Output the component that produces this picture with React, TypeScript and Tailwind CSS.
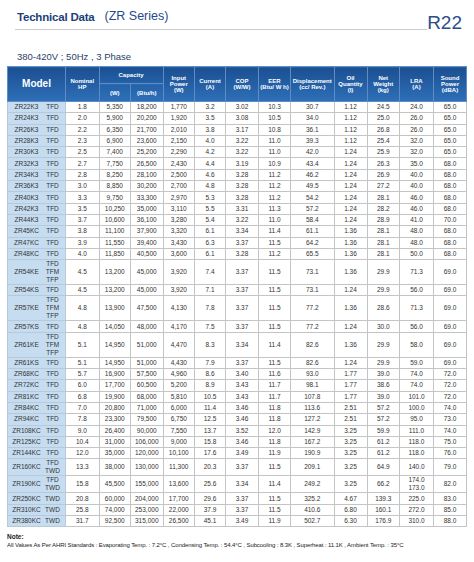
import React from "react";

type Row = { m: string; t: string[]; v: string[] };

const rows: Row[] = [
  { m: "ZR22K3", t: ["TFD"], v: ["1.8", "5,350", "18,200", "1,770", "3.2", "3.02", "10.3", "30.7", "1.12", "24.5", "24.0", "65.0"] },
  { m: "ZR24K3", t: ["TFD"], v: ["2.0", "5,900", "20,200", "1,920", "3.5", "3.08", "10.5", "34.0", "1.12", "25.0", "26.0", "65.0"] },
  { m: "ZR26K3", t: ["TFD"], v: ["2.2", "6,350", "21,700", "2,010", "3.8", "3.17", "10.8", "36.1", "1.12", "26.8", "26.0", "65.0"] },
  { m: "ZR28K3", t: ["TFD"], v: ["2.3", "6,900", "23,600", "2,150", "4.0", "3.22", "11.0", "39.3", "1.12", "25.4", "32.0", "65.0"] },
  { m: "ZR30K3", t: ["TFD"], v: ["2.5", "7,400", "25,200", "2,290", "4.2", "3.22", "11.0", "42.0", "1.24", "25.9", "32.0", "65.0"] },
  { m: "ZR32K3", t: ["TFD"], v: ["2.7", "7,750", "26,500", "2,430", "4.4", "3.19", "10.9", "43.4", "1.24", "26.3", "35.0", "68.0"] },
  { m: "ZR34K3", t: ["TFD"], v: ["2.8", "8,250", "28,100", "2,500", "4.6", "3.28", "11.2", "46.2", "1.24", "26.9", "40.0", "68.0"] },
  { m: "ZR36K3", t: ["TFD"], v: ["3.0", "8,850", "30,200", "2,700", "4.8", "3.28", "11.2", "49.5", "1.24", "27.2", "40.0", "68.0"] },
  { m: "ZR40K3", t: ["TFD"], v: ["3.3", "9,750", "33,300", "2,970", "5.3", "3.28", "11.2", "54.2", "1.24", "28.1", "46.0", "68.0"] },
  { m: "ZR42K3", t: ["TFD"], v: ["3.5", "10,250", "35,000", "3,110", "5.5", "3.31", "11.3", "57.2", "1.24", "28.2", "46.0", "68.0"] },
  { m: "ZR44K3", t: ["TFD"], v: ["3.7", "10,600", "36,100", "3,280", "5.4", "3.22", "11.0", "58.4", "1.24", "28.9", "41.0", "70.0"] },
  { m: "ZR45KC", t: ["TFD"], v: ["3.8", "11,100", "37,900", "3,320", "6.1", "3.34", "11.4", "61.1", "1.36", "28.1", "48.0", "68.0"] },
  { m: "ZR47KC", t: ["TFD"], v: ["3.9", "11,550", "39,400", "3,430", "6.3", "3.37", "11.5", "64.2", "1.36", "28.1", "48.0", "68.0"] },
  { m: "ZR48KC", t: ["TFD"], v: ["4.0", "11,850", "40,500", "3,600", "6.1", "3.28", "11.2", "65.5", "1.36", "28.1", "50.0", "68.0"] },
  { m: "ZR54KE", t: ["TFD", "TFM", "TFP"], v: ["4.5", "13,200", "45,000", "3,920", "7.4", "3.37", "11.5", "73.1", "1.36", "29.9", "71.3", "69.0"] },
  { m: "ZR54KS", t: ["TFD"], v: ["4.5", "13,200", "45,000", "3,920", "7.1", "3.37", "11.5", "73.1", "1.24", "29.9", "56.0", "69.0"] },
  { m: "ZR57KE", t: ["TFD", "TFM", "TFP"], v: ["4.8", "13,900", "47,500", "4,130", "7.8", "3.37", "11.5", "77.2", "1.36", "28.6", "71.3", "69.0"] },
  { m: "ZR57KS", t: ["TFD"], v: ["4.8", "14,050", "48,000", "4,170", "7.5", "3.37", "11.5", "77.2", "1.24", "30.0", "56.0", "69.0"] },
  { m: "ZR61KE", t: ["TFD", "TFM", "TFP"], v: ["5.1", "14,950", "51,000", "4,470", "8.3", "3.34", "11.4", "82.6", "1.36", "29.9", "58.0", "69.0"] },
  { m: "ZR61KS", t: ["TFD"], v: ["5.1", "14,950", "51,000", "4,430", "7.9", "3.37", "11.5", "82.6", "1.24", "29.9", "59.0", "69.0"] },
  { m: "ZR68KC", t: ["TFD"], v: ["5.7", "16,900", "57,500", "4,960", "8.6", "3.40", "11.6", "93.0", "1.77", "39.0", "74.0", "72.0"] },
  { m: "ZR72KC", t: ["TFD"], v: ["6.0", "17,700", "60,500", "5,200", "8.9", "3.43", "11.7", "98.1", "1.77", "38.6", "74.0", "72.0"] },
  { m: "ZR81KC", t: ["TFD"], v: ["6.8", "19,900", "68,000", "5,810", "10.5", "3.43", "11.7", "107.8", "1.77", "39.0", "101.0", "72.0"] },
  { m: "ZR84KC", t: ["TFD"], v: ["7.0", "20,800", "71,000", "6,000", "11.4", "3.46", "11.8", "113.6", "2.51", "57.2", "100.0", "74.0"] },
  { m: "ZR94KC", t: ["TFD"], v: ["7.8", "23,300", "79,500", "6,750", "12.5", "3.46", "11.8", "127.2", "2.51", "57.2", "95.0", "73.0"] },
  { m: "ZR108KC", t: ["TFD"], v: ["9.0", "26,400", "90,000", "7,550", "13.7", "3.52", "12.0", "142.9", "3.25", "59.9", "111.0", "74.0"] },
  { m: "ZR125KC", t: ["TFD"], v: ["10.4", "31,000", "106,000", "9,000", "15.8", "3.46", "11.8", "167.2", "3.25", "61.2", "118.0", "75.0"] },
  { m: "ZR144KC", t: ["TFD"], v: ["12.0", "35,000", "120,000", "10,100", "17.6", "3.49", "11.9", "190.9", "3.25", "61.2", "118.0", "76.0"] },
  { m: "ZR160KC", t: ["TFD", "TWD"], v: ["13.3", "38,000", "130,000", "11,300", "20.3", "3.37", "11.5", "209.1", "3.25", "64.9", "140.0", "79.0"] },
  { m: "ZR190KC", t: ["TFD", "TWD"], v: ["15.8", "45,500", "155,000", "13,600", "25.6", "3.34", "11.4", "249.2", "3.25", "66.2", "174.0\n173.0", "82.0"] },
  { m: "ZR250KC", t: ["TWD"], v: ["20.8", "60,000", "204,000", "17,700", "29.6", "3.37", "11.5", "325.2", "4.67", "139.3", "225.0", "83.0"] },
  { m: "ZR310KC", t: ["TWD"], v: ["25.8", "74,000", "253,000", "22,000", "37.9", "3.37", "11.5", "410.6", "6.80", "160.1", "272.0", "85.0"] },
  { m: "ZR380KC", t: ["TWD"], v: ["31.7", "92,500", "315,000", "26,500", "45.1", "3.49", "11.9", "502.7", "6.30", "176.9", "310.0", "88.0"] },
];

const rowHeight: Record<number, string> = {
  1: "h-[11.3px]",
  2: "h-[16.5px]",
  3: "h-[25px]",
};

const colWidths = [
  "w-[58px]",
  "w-[33.5px]",
  "w-[31.5px]",
  "w-[32.5px]",
  "w-[31.5px]",
  "w-[31px]",
  "w-[33px]",
  "w-[32px]",
  "w-[43.5px]",
  "w-[33px]",
  "w-[32.5px]",
  "w-[34px]",
  "w-[33px]",
];

const headCell =
  "border border-[#5f8cc4] bg-linear-to-b from-[#1b4f92] to-[#2e70b8] text-white font-bold text-[6px] leading-[6px] text-center align-middle px-0";

const sideHeads: string[][] = [
  ["Input", "Power", "(W)"],
  ["Current", "(A)"],
  ["COP", "(W/W)"],
  ["EER", "(Btu/ W h)"],
  ["Displacement", "(cc/ Rev.)"],
  ["Oil", "Quantity", "(l)"],
  ["Net", "Weight", "(kg)"],
  ["LRA", "(A)"],
  ["Sound", "Power", "(dBA)"],
];

function Lines({ items }: { items: string[] }) {
  return (
    <>
      {items.map((s) => (
        <div key={s}>{s}</div>
      ))}
    </>
  );
}

export default function App() {
  return (
    <div className="w-[474px] h-[562px] overflow-hidden bg-white [font-family:'Liberation_Sans',Arial,sans-serif]">
      <div className="flex items-end pl-[15px] pr-[12px] pt-[10px]">
        <div className="flex flex-1 items-baseline gap-[10px] border-b border-[#cacaca] pb-[5px] pl-[2px]">
          <span className="text-[11.5px] leading-[14px] font-bold tracking-[-0.2px] text-[#1d3f78]">
            Technical Data
          </span>
          <span className="text-[12.5px] leading-[14px] text-[#1f4a8c] relative top-[-1px]">
            (ZR Series)
          </span>
        </div>
        <span className="text-[19px] leading-none text-[#2d4e87] mb-[-2px]">R22</span>
      </div>

      <div className="mt-[21px] pl-[17px] text-[9.5px] leading-[12px] text-[#2b3f66]">
        380-420V ; 50Hz , 3 Phase
      </div>

      <table className="mt-[3px] ml-[7px] w-[459px] table-fixed border-collapse border-t border-t-[#163f78]">
        <colgroup>
          {colWidths.map((w, i) => (
            <col key={i} className={w} />
          ))}
        </colgroup>
        <thead>
          <tr className="h-[17px]">
            <th rowSpan={2} className={headCell + " text-[10px] leading-[10px]"}>
              Model
            </th>
            <th rowSpan={2} className={headCell}>
              <Lines items={["Nominal", "HP"]} />
            </th>
            <th colSpan={2} className={headCell + " from-[#1b4f92] to-[#2462a9]"}>
              Capacity
            </th>
            {sideHeads.map((h) => (
              <th key={h[0]} rowSpan={2} className={headCell}>
                <Lines items={h} />
              </th>
            ))}
          </tr>
          <tr className="h-[18px]">
            <th className={headCell + " from-[#2462a9] to-[#2e70b8]"}>(W)</th>
            <th className={headCell + " from-[#2462a9] to-[#2e70b8]"}>(Btu/h)</th>
          </tr>
        </thead>
        <tbody className="text-[6.5px] leading-[8px] text-[#333]">
          {rows.map((r) => {
            const lines = Math.max(r.t.length, r.v[10].includes("\n") ? 2 : 1);
            return (
              <tr key={r.m} className={rowHeight[lines]}>
                <td className="border border-[#b9c9d8] bg-[#c6ddf1] p-0 align-middle">
                  <div className="flex items-center">
                    <span className="w-[37px] text-center">{r.m}</span>
                    <span className="w-[15px] text-center">
                      <Lines items={r.t} />
                    </span>
                  </div>
                </td>
                {r.v.map((val, i) => (
                  <td
                    key={i}
                    className="border border-[#c4c4c4] p-0 text-center align-middle whitespace-pre-line"
                  >
                    {val}
                  </td>
                ))}
              </tr>
            );
          })}
        </tbody>
      </table>

      <div className="mt-[6px] pl-[7px] text-[#222]">
        <div className="text-[6.5px] leading-[8px] font-bold">Note:</div>
        <div className="text-[6px] leading-[8px] tracking-[-0.1px]">
          All Values As Per AHRI Standards : Evaporating Temp. : 7.2°C , Condensing Temp. : 54.4°C , Subcooling : 8.3K , Superheat : 11.1K , Ambient Temp. : 35°C
        </div>
      </div>
    </div>
  );
}
